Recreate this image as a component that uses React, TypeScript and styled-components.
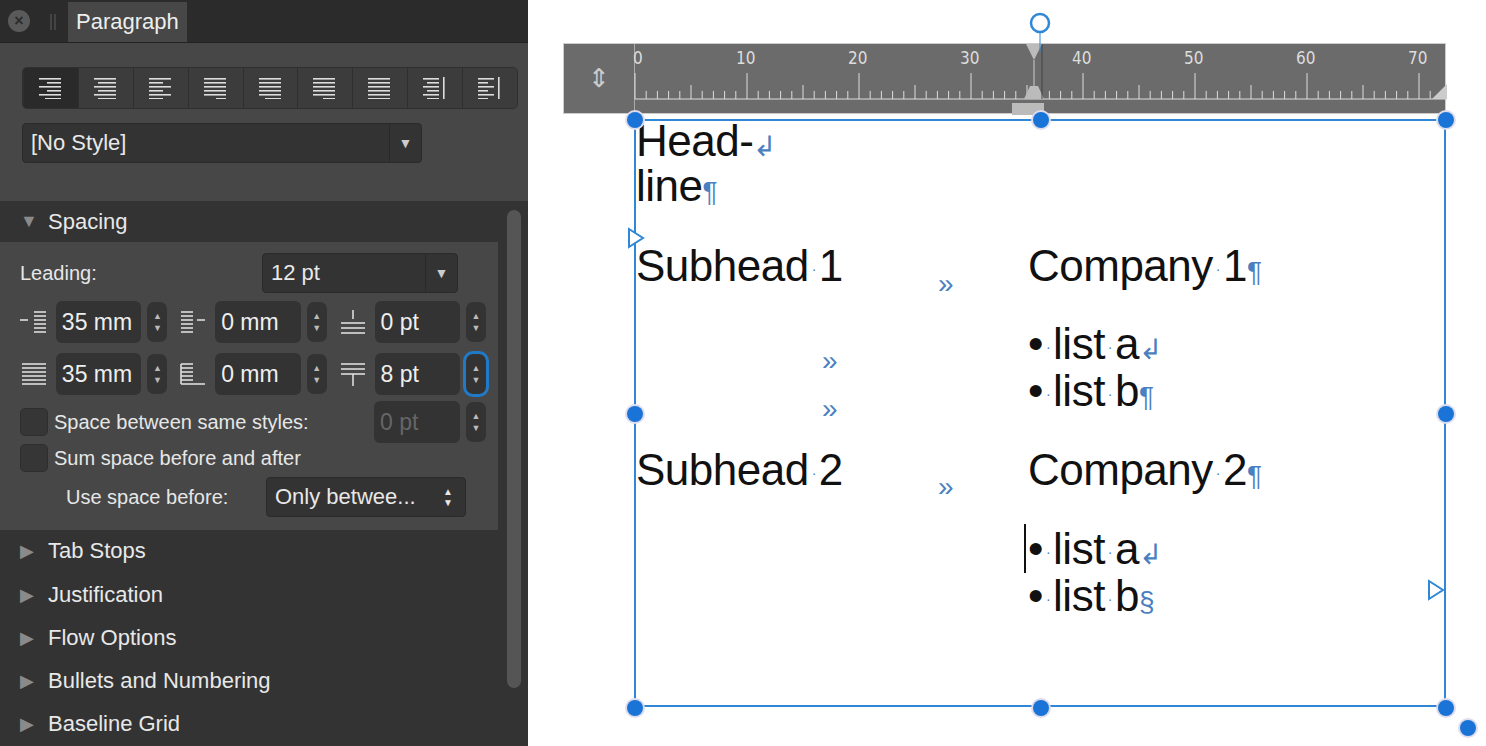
import React from "react";
import styled, { createGlobalStyle } from "styled-components";

const G = createGlobalStyle`
  html,body{margin:0;padding:0;background:#fff;overflow:hidden;}
  *{box-sizing:border-box;}
`;
const Page = styled.div`display:flex;width:1486px;height:746px;font-family:"Liberation Sans",Arial,sans-serif;`;
const Panel = styled.div`width:528px;height:746px;background:#333;display:flex;flex-direction:column;color:#e6e6e6;overflow:hidden;position:relative;`;
const TabBar = styled.div`height:44px;background:#2b2b2b;display:flex;align-items:flex-end;border-bottom:1px solid #222;`;
const Close = styled.div`width:22px;height:22px;border-radius:50%;background:#5a5a5a;margin:0 0 10px 8px;display:flex;align-items:center;justify-content:center;color:#2b2b2b;font-size:16px;font-weight:bold;`;
const Grip = styled.div`width:6px;height:16px;border-left:2px solid #444;border-right:2px solid #444;margin:0 12px 12px 20px;`;
const Tab = styled.div`background:#474747;height:40px;padding:0 8px;display:flex;align-items:center;font-size:22px;color:#eee;`;
const Top = styled.div`background:#474747;padding:24px 10px 0 22px;height:160px;`;
const AlignBar = styled.div`display:flex;width:496px;height:42px;background:#3a3a3a;border-radius:5px;border:1px solid #2f2f2f;overflow:hidden;`;
const ABtn = styled.div<{ $on?: boolean }>`flex:1;display:flex;align-items:center;justify-content:center;background:${p => p.$on ? "#2a2a2a" : "#3c3c3c"};border-left:1px solid #2f2f2f;`;
const Drop = styled.div<{ $w: number }>`width:${p => p.$w}px;height:40px;background:#333;border:1px solid #2a2a2a;border-radius:4px;display:flex;align-items:center;font-size:22px;color:#e8e8e8;`;
const DropText = styled.div`flex:1;padding-left:8px;`;
const DropArrow = styled.div`width:32px;height:100%;border-left:1px solid #2a2a2a;display:flex;align-items:center;justify-content:center;font-size:14px;color:#ccc;`;
const Header = styled.div<{ $open?: boolean }>`height:${p => p.$open ? 42 : 44}px;background:#333;display:flex;align-items:center;padding-left:20px;font-size:22px;gap:10px;color:#e8e8e8;`;
const Tri = styled.span`color:#8a8a8a;font-size:18px;width:18px;`;
const Body = styled.div`background:#474747;height:292px;padding:8px 0 0 20px;display:flex;flex-direction:column;width:498px;`;
const Row = styled.div`display:flex;align-items:center;height:52px;`;
const Label = styled.div<{ $w?: number }>`font-size:20px;width:${p => p.$w ?? "auto"}px;`;
const Field = styled.div<{ $dim?: boolean }>`width:86px;height:42px;background:#333;border-radius:6px;display:flex;align-items:center;padding-left:6px;font-size:23px;color:${p => p.$dim ? "#666" : "#eee"};overflow:hidden;white-space:nowrap;`;
const Spin = styled.div<{ $sel?: boolean }>`width:20px;height:40px;margin:0 12px 0 6px;background:#333;border-radius:7px;display:flex;flex-direction:column;align-items:center;justify-content:center;font-size:9px;color:#bbb;line-height:12px;outline:${p => p.$sel ? "3px solid #1f7ac8" : "none"};outline-offset:0;`;
const Ico = styled.div`width:32px;margin-right:4px;display:flex;align-items:center;`;
const Check = styled.div`width:28px;height:28px;border-radius:5px;background:#363636;border:1px solid #2e2e2e;margin-right:6px;`;
const Scroll = styled.div`position:absolute;left:507px;top:210px;width:14px;height:478px;background:#555;border-radius:7px;`;

const Canvas = styled.div`flex:1;position:relative;background:#fff;`;
const Ruler = styled.div`position:absolute;left:35px;top:43px;width:883px;height:71px;background:#6b6b6b;border:1px solid #ccc;display:flex;`;
const RulerLeft = styled.div`width:71px;display:flex;align-items:center;justify-content:center;color:#ccc;font-size:26px;border-right:1px solid #aaa;`;
const Num = styled.div`position:absolute;top:4px;font-size:17px;color:#ddd;font-family:"DejaVu Sans Condensed","Liberation Sans",sans-serif;`;
const Frame = styled.div`position:absolute;left:106px;top:119px;width:812px;height:588px;border:2px solid #2f87d6;`;
const Txt = styled.div<{ $x: number; $y: number }>`position:absolute;left:${p => p.$x}px;top:${p => p.$y}px;font-size:44px;color:#111;white-space:nowrap;line-height:44px;letter-spacing:-0.5px;`;
const Mark = styled.span`color:#4a7fc0;font-size:28px;`;
const Dot = styled.span`color:#4a7fc0;font-size:14px;vertical-align:middle;margin:0 3px;`;
const Handle = styled.div<{ $x: number; $y: number }>`position:absolute;left:${p => p.$x - 8}px;top:${p => p.$y - 8}px;width:16px;height:16px;border-radius:50%;background:#1a73d6;box-shadow:0 0 0 2px #dde;`;

const lines = (rows: number[], w = 22) => (
  <svg width="24" height="22" viewBox="0 0 24 22">
    {rows.map((x, i) => <rect key={i} x={x < 0 ? 0 : x} y={i * 4 + 1} width={x < 0 ? w + x : w - x} height="1.6" fill="#ddd" />)}
  </svg>
);
const alignIcons = [
  [0, 8, 0, 8, 0, 6],
  [0, 4, 0, 4, 0, 4],
  [0, 8, 0, 8, 0, 8],
  [0, 0, 0, 0, 0, 12],
  [0, 0, 0, 0, 0, 6],
  [0, 0, 0, 0, 0, 10],
  [0, 0, 0, 0, 0, 0],
];

const IndIcon = ({ k }: { k: number }) => (
  <svg width="30" height="26" viewBox="0 0 30 26" stroke="#ddd" strokeWidth="1.6">
    {k === 0 && <><line x1="0" y1="11" x2="8" y2="11" />{[3, 7, 11, 15, 19, 23].map(y => <line key={y} x1="14" y1={y} x2="26" y2={y} />)}</>}
    {k === 1 && <><line x1="18" y1="11" x2="26" y2="11" />{[3, 7, 11, 15, 19, 23].map(y => <line key={y} x1="2" y1={y} x2="14" y2={y} />)}</>}
    {k === 2 && <><line x1="14" y1="1" x2="14" y2="10" /><line x1="2" y1="14" x2="26" y2="14" /><line x1="2" y1="19" x2="26" y2="19" /><line x1="2" y1="24" x2="26" y2="24" /></>}
    {k === 3 && [3, 7, 11, 15, 19, 23].map(y => <line key={y} x1="2" y1={y} x2="26" y2={y} />)}
    {k === 4 && <><line x1="2" y1="3" x2="2" y2="23" />{[3, 7, 11, 15, 19].map(y => <line key={y} x1="2" y1={y} x2="14" y2={y} />)}<line x1="2" y1="23" x2="26" y2="23" /></>}
    {k === 5 && <><line x1="2" y1="3" x2="26" y2="3" /><line x1="2" y1="8" x2="26" y2="8" /><line x1="2" y1="13" x2="26" y2="13" /><line x1="14" y1="13" x2="14" y2="25" /></>}
  </svg>
);

const SpinBox = ({ sel }: { sel?: boolean }) => <Spin $sel={sel}><span>▲</span><span>▼</span></Spin>;

export default function App() {
  const ticks = [];
  for (let i = 0; i <= 72; i++) {
    const x = 71 + i * 11.2;
    const h = i % 10 === 0 ? 26 : i % 5 === 0 ? 14 : 8;
    ticks.push(<line key={i} x1={x} x2={x} y1={55 - h} y2={55} stroke="#ddd" strokeWidth="1" />);
  }
  return (
    <Page>
      <G />
      <Panel>
        <TabBar>
          <Close>×</Close>
          <Grip />
          <Tab>Paragraph</Tab>
        </TabBar>
        <Top>
          <AlignBar>
            {alignIcons.map((r, i) => <ABtn key={i} $on={i === 0}>{lines(r.map((v, j) => i === 1 || i === 4 ? v : i === 2 ? -v : v))}</ABtn>)}
            <ABtn><svg width="24" height="22"><g fill="#ddd">{[0, 1, 2, 3, 4, 5].map(j => <rect key={j} x={j % 2 ? 4 : 0} y={j * 4 + 1} width={j % 2 ? 12 : 16} height="1.6" />)}</g><rect x="20" y="0" width="1.6" height="22" fill="#ddd" /></svg></ABtn>
            <ABtn><svg width="24" height="22"><g fill="#ddd">{[0, 1, 2, 3, 4, 5].map(j => <rect key={j} x="0" y={j * 4 + 1} width={j % 2 ? 10 : 16} height="1.6" />)}</g><rect x="20" y="0" width="1.6" height="22" fill="#ddd" /></svg></ABtn>
          </AlignBar>
          <div style={{ height: 14 }} />
          <Drop $w={400}><DropText>[No Style]</DropText><DropArrow>▼</DropArrow></Drop>
        </Top>
        <Header $open><Tri>▼</Tri>Spacing</Header>
        <Body>
          <Row style={{ height: 46 }}>
            <Label $w={242}>Leading:</Label>
            <Drop $w={196}><DropText>12 pt</DropText><DropArrow>▼</DropArrow></Drop>
          </Row>
          <Row>
            <Ico><IndIcon k={0} /></Ico><Field>35 mm</Field><SpinBox />
            <Ico><IndIcon k={1} /></Ico><Field>0 mm</Field><SpinBox />
            <Ico><IndIcon k={2} /></Ico><Field>0 pt</Field><SpinBox />
          </Row>
          <Row>
            <Ico><IndIcon k={3} /></Ico><Field>35 mm</Field><SpinBox />
            <Ico><IndIcon k={4} /></Ico><Field>0 mm</Field><SpinBox />
            <Ico><IndIcon k={5} /></Ico><Field>8 pt</Field><SpinBox sel />
          </Row>
          <Row style={{ height: 40, marginTop: 2 }}>
            <Check /><Label $w={320}>Space between same styles:</Label><Field $dim>0 pt</Field><SpinBox />
          </Row>
          <Row style={{ height: 32 }}>
            <Check /><Label>Sum space before and after</Label>
          </Row>
          <Row style={{ height: 46, paddingLeft: 46 }}>
            <Label $w={200}>Use space before:</Label>
            <Drop $w={200}><DropText>Only betwee...</DropText><span style={{ fontSize: 10, paddingRight: 12, lineHeight: "11px", textAlign: "center" }}>▲<br />▼</span></Drop>
          </Row>
        </Body>
        <Header><Tri>▶</Tri>Tab Stops</Header>
        <Header><Tri>▶</Tri>Justification</Header>
        <Header><Tri>▶</Tri>Flow Options</Header>
        <Header><Tri>▶</Tri>Bullets and Numbering</Header>
        <Header><Tri>▶</Tri>Baseline Grid</Header>
        <Scroll />
      </Panel>
      <Canvas>
        <Ruler>
          <RulerLeft>⇕</RulerLeft>
          <svg width="883" height="71" style={{ position: "absolute", left: 0, top: 0 }}>
            <line x1="71" x2="883" y1="55" y2="55" stroke="#ddd" />
            {ticks}
            <polygon points="462,0 478,0 470,16" fill="#bbb" />
            <line x1="470" x2="470" y1="16" y2="48" stroke="#ccc" />
            <polygon points="460,55 480,55 474,42 466,42" fill="#bbb" />
            <rect x="448" y="59" width="32" height="12" fill="#bbb" />
            <line x1="478" x2="478" y1="0" y2="55" stroke="#444" />
            <polygon points="883,40 883,55 868,55" fill="#ccc" />
          </svg>
          {[0, 10, 20, 30, 40, 50, 60, 70].map(n => <Num key={n} style={{ left: 71 + n * 11.2 - (n ? 11 : 2) }}>{n}</Num>)}
        </Ruler>
        <svg width="30" height="44" style={{ position: "absolute", left: 497, top: 8 }}>
          <circle cx="15" cy="15" r="9" fill="#fff" stroke="#2f87d6" strokeWidth="2.5" />
          <line x1="15" x2="15" y1="24" y2="44" stroke="#2f87d6" />
        </svg>
        <Frame>
          <Txt $x={0} $y={-2}>Head-<Mark>↲</Mark></Txt>
          <Txt $x={0} $y={43}>line<Mark>¶</Mark></Txt>
          <Txt $x={0} $y={123}>Subhead<Dot>·</Dot>1</Txt>
          <Txt $x={302} $y={135}><Mark>»</Mark></Txt>
          <Txt $x={392} $y={123}>Company<Dot>·</Dot>1<Mark>¶</Mark></Txt>
          <Txt $x={186} $y={212}><Mark>»</Mark></Txt>
          <Txt $x={186} $y={260}><Mark>»</Mark></Txt>
          <Txt $x={392} $y={201}>•<Dot>·</Dot>list<Dot>·</Dot>a<Mark>↲</Mark></Txt>
          <Txt $x={392} $y={248}>•<Dot>·</Dot>list<Dot>·</Dot>b<Mark>¶</Mark></Txt>
          <Txt $x={0} $y={327}>Subhead<Dot>·</Dot>2</Txt>
          <Txt $x={302} $y={338}><Mark>»</Mark></Txt>
          <Txt $x={392} $y={327}>Company<Dot>·</Dot>2<Mark>¶</Mark></Txt>
          <Txt $x={388} $y={406}><span style={{ borderLeft: "2px solid #111", marginRight: 2 }} />•<Dot>·</Dot>list<Dot>·</Dot>a<Mark>↲</Mark></Txt>
          <Txt $x={392} $y={453}>•<Dot>·</Dot>list<Dot>·</Dot>b<Mark>§</Mark></Txt>
          <svg width="20" height="22" style={{ position: "absolute", left: -10, top: 106 }}><polygon points="3,2 17,11 3,20" fill="#fff" stroke="#2f87d6" strokeWidth="2" /></svg>
          <svg width="20" height="22" style={{ position: "absolute", left: 790, top: 458 }}><polygon points="3,2 17,11 3,20" fill="#fff" stroke="#2f87d6" strokeWidth="2" /></svg>
          <Handle $x={-1} $y={-1} /><Handle $x={405} $y={-1} /><Handle $x={810} $y={-1} />
          <Handle $x={-1} $y={293} /><Handle $x={810} $y={293} />
          <Handle $x={-1} $y={587} /><Handle $x={405} $y={587} /><Handle $x={810} $y={587} />
          <Handle $x={832} $y={607} />
        </Frame>
      </Canvas>
    </Page>
  );
}
